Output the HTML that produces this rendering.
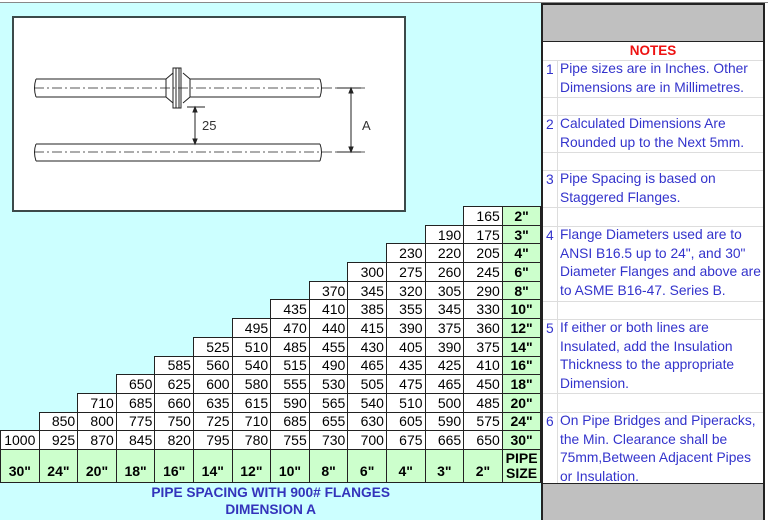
<!DOCTYPE html>
<html><head><meta charset="utf-8"><style>
*{margin:0;padding:0;box-sizing:border-box}
body{width:768px;height:523px;overflow:hidden;background:#fff;position:relative;font-family:"Liberation Sans",Arial,sans-serif}
#cyan{position:absolute;left:0;top:3px;width:541px;height:517px;background:#ccffff}
#draw{position:absolute;left:12px;top:16px;width:394px;height:196px;background:#fff;border:2px solid #3c4a4a}
table{position:absolute;left:0;top:206px;border-collapse:collapse;table-layout:fixed;width:541px}
td{height:18.7px;font-size:14px;text-align:right;padding:0 2px 0 0;line-height:16px;color:#000}
td.v{background:#fff;border:1px solid #222}
td.g{background:#ccffcc;border:1px solid #222;font-weight:bold;text-align:center;padding:0}
tr.gr td{height:33px;vertical-align:bottom;padding-bottom:3px}
td.t{height:37px;text-align:center;color:#3333bb;font-weight:bold;font-size:13.7px;line-height:17px;border-top:1px solid #222;padding:0}
#notes{position:absolute;left:541px;top:3px;width:224px;height:517px;border:2px solid #222;background:#fff}
.gray{position:absolute;left:0;width:100%;background:#c0c0c0}
.ln{position:absolute;left:0;width:100%;height:1px;background:#ddd}
.n{position:absolute;left:3px;font-size:13.8px;color:#3333cc}
.tx{position:absolute;left:17px;font-size:13.8px;color:#3333cc;white-space:nowrap;line-height:18.6px}
</style></head><body>
<div style="position:absolute;left:0;top:0;width:768px;height:3px;background:#fff;border-bottom:1px solid #888"></div>
<div id="cyan"></div>
<div id="draw">
<svg width="390" height="192" viewBox="14 18 390 192" style="position:absolute;left:0;top:0" fill="none" stroke="#222" stroke-width="1">
<path d="M36 79H166M190 79H320M36 97H166M190 97H320"/>
<path d="M36 79q-3 9 0 18M320 79q3 9 0 18"/>
<path d="M166 79L173 73M166 97L173 103M190 79L183 73M190 97L183 103M166 79V97M190 79V97"/>
<rect x="173" y="68" width="8" height="40"/><rect x="176" y="68" width="3" height="40"/>
<path d="M36 144H320M36 161H320M36 144q-3 8 0 17M320 144q3 8 0 17"/>
<path d="M34 88H365M34 152H365" stroke-dasharray="10 3 2 3" stroke-width="0.8"/>
<path d="M187 107H205M195 107V144M337 88H361M337 152H361M351 88V152"/>
<path d="M195 107l-2 5h4zM195 144l-2-5h4zM351 88l-2 5h4zM351 152l-2-5h4z" fill="#222"/>
<text x="202" y="130" font-size="13" fill="#333" stroke="none" font-family="Liberation Sans">25</text>
<text x="362" y="130" font-size="13" fill="#333" stroke="none" font-family="Liberation Sans">A</text>
</svg></div>
<table>
<colgroup><col span="14" style="width:38.6px"></colgroup>
<tr><td colspan="12"></td><td class="v">165</td><td class="g">2"</td></tr>
<tr><td colspan="11"></td><td class="v">190</td><td class="v">175</td><td class="g">3"</td></tr>
<tr><td colspan="10"></td><td class="v">230</td><td class="v">220</td><td class="v">205</td><td class="g">4"</td></tr>
<tr><td colspan="9"></td><td class="v">300</td><td class="v">275</td><td class="v">260</td><td class="v">245</td><td class="g">6"</td></tr>
<tr><td colspan="8"></td><td class="v">370</td><td class="v">345</td><td class="v">320</td><td class="v">305</td><td class="v">290</td><td class="g">8"</td></tr>
<tr><td colspan="7"></td><td class="v">435</td><td class="v">410</td><td class="v">385</td><td class="v">355</td><td class="v">345</td><td class="v">330</td><td class="g">10"</td></tr>
<tr><td colspan="6"></td><td class="v">495</td><td class="v">470</td><td class="v">440</td><td class="v">415</td><td class="v">390</td><td class="v">375</td><td class="v">360</td><td class="g">12"</td></tr>
<tr><td colspan="5"></td><td class="v">525</td><td class="v">510</td><td class="v">485</td><td class="v">455</td><td class="v">430</td><td class="v">405</td><td class="v">390</td><td class="v">375</td><td class="g">14"</td></tr>
<tr><td colspan="4"></td><td class="v">585</td><td class="v">560</td><td class="v">540</td><td class="v">515</td><td class="v">490</td><td class="v">465</td><td class="v">435</td><td class="v">425</td><td class="v">410</td><td class="g">16"</td></tr>
<tr><td colspan="3"></td><td class="v">650</td><td class="v">625</td><td class="v">600</td><td class="v">580</td><td class="v">555</td><td class="v">530</td><td class="v">505</td><td class="v">475</td><td class="v">465</td><td class="v">450</td><td class="g">18"</td></tr>
<tr><td colspan="2"></td><td class="v">710</td><td class="v">685</td><td class="v">660</td><td class="v">635</td><td class="v">615</td><td class="v">590</td><td class="v">565</td><td class="v">540</td><td class="v">510</td><td class="v">500</td><td class="v">485</td><td class="g">20"</td></tr>
<tr><td></td><td class="v">850</td><td class="v">800</td><td class="v">775</td><td class="v">750</td><td class="v">725</td><td class="v">710</td><td class="v">685</td><td class="v">655</td><td class="v">630</td><td class="v">605</td><td class="v">590</td><td class="v">575</td><td class="g">24"</td></tr>
<tr><td class="v" style="padding:0;text-align:center">1000</td><td class="v">925</td><td class="v">870</td><td class="v">845</td><td class="v">820</td><td class="v">795</td><td class="v">780</td><td class="v">755</td><td class="v">730</td><td class="v">700</td><td class="v">675</td><td class="v">665</td><td class="v">650</td><td class="g">30"</td></tr>
<tr class="gr"><td class="g">30"</td><td class="g">24"</td><td class="g">20"</td><td class="g">18"</td><td class="g">16"</td><td class="g">14"</td><td class="g">12"</td><td class="g">10"</td><td class="g">8"</td><td class="g">6"</td><td class="g">4"</td><td class="g">3"</td><td class="g">2"</td><td class="g" style="line-height:15px;padding-bottom:1px">PIPE<br>SIZE</td></tr>
<tr><td colspan="14" class="t">PIPE SPACING WITH 900# FLANGES<br>DIMENSION A</td></tr>
</table>
<div id="notes">
<div class="gray" style="top:0;height:37px;border-bottom:1px solid #222"></div>
<div class="gray" style="top:478px;height:37px;border-top:1px solid #222"></div>
<div style="position:absolute;left:0;top:37px;width:100%;text-align:center;color:#ee1111;font-weight:bold;font-size:13.5px;line-height:18px">NOTES</div>
<div class="ln" style="top:55px"></div><div class="ln" style="top:92px"></div><div class="ln" style="top:110px"></div>
<div class="ln" style="top:147px"></div><div class="ln" style="top:165px"></div><div class="ln" style="top:202px"></div>
<div class="ln" style="top:221px"></div><div class="ln" style="top:296px"></div><div class="ln" style="top:314px"></div>
<div class="ln" style="top:388px"></div><div class="ln" style="top:407px"></div>
<div style="position:absolute;left:14px;top:55px;width:1px;height:423px;background:#ddd"></div>
<div class="n" style="top:57px">1</div><div class="tx" style="top:55px">Pipe sizes are in Inches. Other<br>Dimensions are in Millimetres.</div>
<div class="n" style="top:112px">2</div><div class="tx" style="top:110px">Calculated Dimensions Are<br>Rounded up to the Next 5mm.</div>
<div class="n" style="top:167px">3</div><div class="tx" style="top:165px">Pipe Spacing is based on<br>Staggered Flanges.</div>
<div class="n" style="top:223px">4</div><div class="tx" style="top:221px">Flange Diameters used are to<br>ANSI B16.5 up to 24", and 30"<br>Diameter Flanges and above are<br>to ASME B16-47. Series B.</div>
<div class="n" style="top:316px">5</div><div class="tx" style="top:314px">If either or both lines are<br>Insulated, add the Insulation<br>Thickness to the appropriate<br>Dimension.</div>
<div class="n" style="top:409px">6</div><div class="tx" style="top:407px">On Pipe Bridges and Piperacks,<br>the Min. Clearance shall be<br>75mm,Between Adjacent Pipes<br>or Insulation.</div>
</div>
</body></html>
